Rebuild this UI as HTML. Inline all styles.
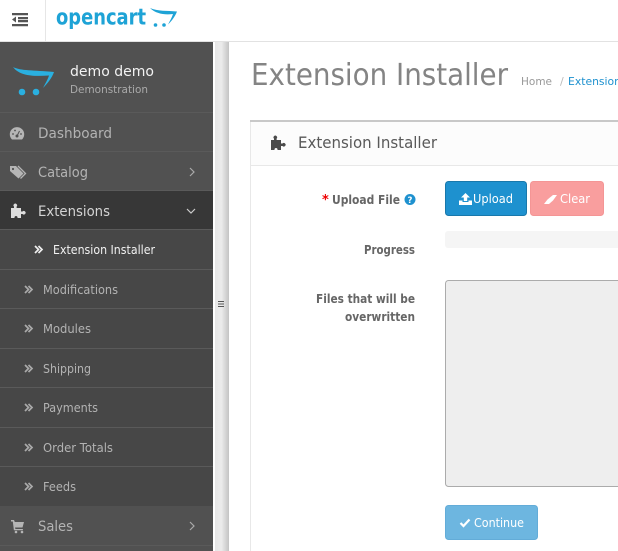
<!DOCTYPE html>
<html><head><meta charset="utf-8"><style>
html,body{margin:0;padding:0;width:618px;height:551px;overflow:hidden;background:#fff}
svg{display:block}
text{font-family:"DejaVu Sans","Liberation Sans",sans-serif}
</style></head><body>
<svg width="618" height="551" viewBox="0 0 618 551" xmlns="http://www.w3.org/2000/svg">
<defs>
<linearGradient id="g" x1="0" x2="1" y1="0" y2="0"><stop offset="0" stop-color="#e6e6e6"/><stop offset=".45" stop-color="#ececec"/><stop offset=".8" stop-color="#d2d2d2"/><stop offset="1" stop-color="#c4c4c4"/></linearGradient>
<path id="dc" d="M0 0l3.500 3.500L0 7M3.500 0l3.500 3.500L3.500 7" fill="none" stroke-width="1.700"/>
<path id="pz" d="M0 4H3V2.600A1.800 1.800 0 1 1 5.600 2.600V4H10V7.500H11.500A1.800 1.800 0 1 1 11.500 10H10V14H6.500V13A1.600 1.600 0 0 0 3.500 13V14H0Z"/>
</defs>
<rect width="618" height="551" fill="#fff"/>
<rect x="0" y="41" width="618" height="1" fill="#e2e2e2"/>
<rect x="45" y="0" width="1" height="41" fill="#e6e6e6"/>
<path d="M12 13h16v2.200H12zM18 17h10v2.200H18zM18 20h10v2.200H18zM12 24h16v2.200H12zM12 19.500l4-3v6z" fill="#555"/>
<text x="56" y="24.500" font-size="22" font-weight="bold" fill="#1ea3d6" textLength="90" lengthAdjust="spacingAndGlyphs">opencart</text>
<path d="M150 8c8 3.500 17 2.500 27 3.500c-2 5-5 9-9 13c2-4 4-7 5-10.500c-8 1-17 0-23-6z" fill="#1ea3d6"/>
<circle cx="155.500" cy="25" r="1.800" fill="#1ea3d6"/><circle cx="164" cy="25" r="1.800" fill="#1ea3d6"/>

<rect x="0" y="42" width="213" height="509" fill="#515151"/>
<rect x="215" y="42" width="14" height="509" fill="url(#g)"/>
<rect x="0" y="191" width="213" height="38" fill="#373737"/>
<rect x="0" y="230" width="213" height="276" fill="#474747"/>
<g fill="#5a5a5a">
<rect y="112" width="213" height="1"/><rect y="151" width="213" height="1"/><rect y="190" width="213" height="1"/><rect y="229" width="213" height="1"/><rect y="269" width="213" height="1"/><rect y="308" width="213" height="1"/><rect y="348" width="213" height="1"/><rect y="387" width="213" height="1"/><rect y="427" width="213" height="1"/><rect y="466" width="213" height="1"/><rect y="545" width="213" height="1"/>
</g>
<path d="M218 301h6v1h-6zM218 303.500h6v1h-6zM218 306h6v1h-6z" fill="#555"/>

<path d="M13 67c8 4 20 3 41 5c-2 6-7 12-11 16c2-4 5-9 6-12.500c-14 1-29 1-36-8.500z" fill="#2ab0e0"/>
<circle cx="22" cy="92" r="3.300" fill="#2ab0e0"/><circle cx="36" cy="92" r="3.300" fill="#2ab0e0"/>
<text x="70" y="76" font-size="14" fill="#f2f2f2" textLength="84" lengthAdjust="spacingAndGlyphs">demo demo</text>
<text x="70" y="93" font-size="11" fill="#aaaaaa" textLength="78" lengthAdjust="spacingAndGlyphs">Demonstration</text>

<g font-size="14" fill="#b3b3b3">
<text x="38" y="138" textLength="74" lengthAdjust="spacingAndGlyphs">Dashboard</text>
<text x="38" y="177" textLength="50" lengthAdjust="spacingAndGlyphs">Catalog</text>
<text x="38" y="216" fill="#d4d4d4" textLength="72" lengthAdjust="spacingAndGlyphs">Extensions</text>
<text x="38" y="531" textLength="35" lengthAdjust="spacingAndGlyphs">Sales</text>
</g>
<g font-size="12" fill="#b3b3b3">
<text x="53" y="254" fill="#f2f2f2" textLength="102" lengthAdjust="spacingAndGlyphs">Extension Installer</text>
<text x="43" y="294" textLength="75" lengthAdjust="spacingAndGlyphs">Modifications</text>
<text x="43" y="333" textLength="48" lengthAdjust="spacingAndGlyphs">Modules</text>
<text x="43" y="373" textLength="48" lengthAdjust="spacingAndGlyphs">Shipping</text>
<text x="43" y="412" textLength="55" lengthAdjust="spacingAndGlyphs">Payments</text>
<text x="43" y="452" textLength="70" lengthAdjust="spacingAndGlyphs">Order Totals</text>
<text x="43" y="491" textLength="33" lengthAdjust="spacingAndGlyphs">Feeds</text>
</g>
<use href="#dc" x="35" y="246" stroke="#eee"/>
<g stroke="#aaa">
<use href="#dc" x="25" y="286"/><use href="#dc" x="25" y="325"/><use href="#dc" x="25" y="365"/><use href="#dc" x="25" y="404"/><use href="#dc" x="25" y="444"/><use href="#dc" x="25" y="483"/>
</g>
<path d="M190 168l4 4-4 4M190 522l4 4-4 4" fill="none" stroke="#aaa" stroke-width="1.200"/>
<path d="M187 209l4 4 4-4" fill="none" stroke="#ccc" stroke-width="1.200"/>

<!-- dashboard -->
<path d="M12 139.500a7.200 7.200 0 1 1 10 0z" fill="#b5b5b5"/>
<circle cx="17" cy="136" r="1.500" fill="#515151"/><path d="M17 136l2.500-5" stroke="#515151" stroke-width="1"/>
<circle cx="13" cy="134" r=".9" fill="#515151"/><circle cx="21" cy="134" r=".9" fill="#515151"/><circle cx="15" cy="130.500" r=".9" fill="#515151"/>
<!-- tags -->
<path d="M18 166l7.500 7.500-5 5" fill="none" stroke="#b5b5b5" stroke-width="1.300"/>
<path d="M10 166h6l7.500 7.500-5 5L10 171z" fill="#b5b5b5"/><circle cx="13" cy="169" r="1.100" fill="#515151"/>
<!-- puzzle -->
<use href="#pz" x="11" y="204" fill="#dddddd"/>
<!-- cart -->
<path d="M11 520h3l.8 2H24l-1.500 5.500h-7.500l.4 1.500h7.500v1.200h-9L12.800 521.500H11z" fill="#b5b5b5"/><circle cx="16" cy="532" r="1.300" fill="#b5b5b5"/><circle cx="22" cy="532" r="1.300" fill="#b5b5b5"/>

<text x="251" y="85" font-size="30" fill="#848484" textLength="257" lengthAdjust="spacingAndGlyphs">Extension Installer</text>
<text x="521" y="85" font-size="11" fill="#999" textLength="31" lengthAdjust="spacingAndGlyphs">Home</text>
<text x="560" y="85" font-size="11" fill="#bbb">/</text>
<text x="568" y="85" font-size="11" fill="#1e91cf" textLength="53" lengthAdjust="spacingAndGlyphs">Extension</text>

<rect x="250" y="120" width="368" height="2" fill="#c8c8c8"/>
<rect x="250" y="122" width="1" height="429" fill="#e8e8e8"/>
<rect x="251" y="122" width="367" height="43" fill="#fcfcfc"/>
<rect x="251" y="165" width="367" height="1" fill="#e8e8e8"/>
<use href="#pz" x="271" y="136" fill="#4a4a4a"/>
<text x="298" y="148" font-size="16" fill="#595959" textLength="139" lengthAdjust="spacingAndGlyphs">Extension Installer</text>

<g font-size="12" font-weight="bold" fill="#666" text-anchor="end">
<text x="400" y="204" textLength="68" lengthAdjust="spacingAndGlyphs">Upload File</text>
<text x="415" y="254" textLength="51" lengthAdjust="spacingAndGlyphs">Progress</text>
<text x="415" y="303" textLength="99" lengthAdjust="spacingAndGlyphs">Files that will be</text>
<text x="415" y="321" textLength="70" lengthAdjust="spacingAndGlyphs">overwritten</text>
</g>
<text x="322" y="204" font-size="13" font-weight="bold" fill="#e00">*</text>
<circle cx="410" cy="199.500" r="5.500" fill="#1e91cf"/>
<text x="410" y="203" font-size="8.500" font-weight="bold" fill="#fff" text-anchor="middle">?</text>

<rect x="445.500" y="181.500" width="81" height="34" rx="3" fill="#1e91cf" stroke="#1978ab"/>
<path d="M459 200.500h3.500v1.500h6v-1.500h3.500v4.500h-13zM465.500 193l-4.500 4.500h2.800v3.500h3.400v-3.500h2.800z" fill="#fff"/>
<text x="473" y="203" font-size="12" fill="#fff" textLength="40" lengthAdjust="spacingAndGlyphs">Upload</text>
<rect x="530.500" y="181.500" width="73" height="34" rx="3" fill="#f99e9e" stroke="#f49595"/>
<path d="M544 204l3.500-4.500 5.500-4.500h4l-4 5.500-4 3.500z" fill="#fff"/>
<text x="560" y="203" font-size="12" fill="#fff" textLength="30" lengthAdjust="spacingAndGlyphs">Clear</text>

<rect x="445" y="231" width="180" height="17" rx="3" fill="#f5f5f5"/>
<rect x="445.500" y="280.500" width="190" height="206" rx="3" fill="#eeeeee" stroke="#ababab"/>

<rect x="445.500" y="505.500" width="92" height="34" rx="3" fill="#6db6e0" stroke="#63acd8"/>
<path d="M460.500 523l3 3 6-6.500" fill="none" stroke="#fff" stroke-width="2.200"/>
<text x="474" y="527" font-size="12" fill="#fff" textLength="50" lengthAdjust="spacingAndGlyphs">Continue</text>
</svg>
</body></html>
